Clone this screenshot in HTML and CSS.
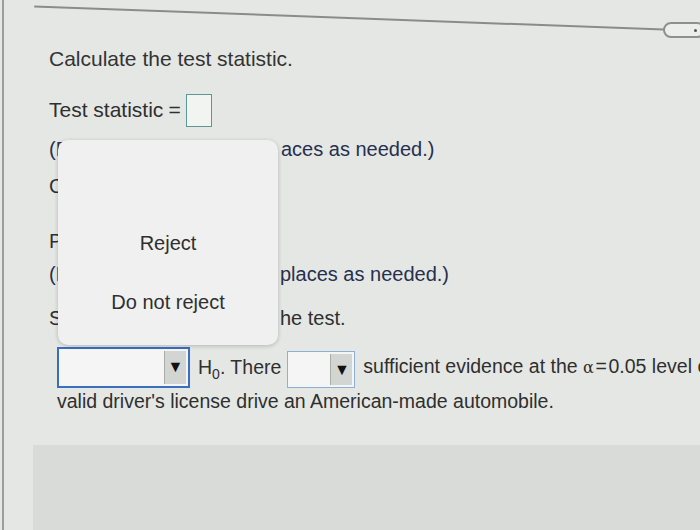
FILE: index.html
```html
<!DOCTYPE html>
<html>
<head>
<meta charset="utf-8">
<link rel="stylesheet" href="styles.css">
</head>
<body>
<div class="frame">
  <div class="topbar">
    <div class="rule"></div>
    <div class="pill"><span class="dot"></span></div>
  </div>
  <div class="content">
    <div class="row title">Calculate the test statistic.</div>
    <div class="row stat">Test statistic <span class="eq">=</span> <span class="answer"></span></div>
    <div class="row note r1"><span class="pre">(Round to two decimal pl</span>aces as needed.)</div>
    <div class="row r2">Calculate the P-value.</div>
    <div class="row r3">P-value = <span class="answer"></span></div>
    <div class="row note r4"><span class="pre">(Round to three decimal </span>places as needed.)</div>
    <div class="row r5"><span class="pre">State the conclusion of t</span>he test.</div>
    <div class="concl">
      <div class="row drow">
        <span class="select wide"><span class="arrow">&#9660;</span></span>
        <span class="txt">H<sub>0</sub>. There</span>
        <span class="select narrow"><span class="arrow">&#9660;</span></span>
        <span class="txt last">sufficient evidence at the <span class="greek">α</span>&#8202;=&#8202;0.05 level of significance</span>
      </div>
      <div class="row r6">valid driver's license drive an American-made automobile.</div>
    </div>
    <div class="menu">
      <div class="item first">Reject</div>
      <div class="item">Do not reject</div>
    </div>
  </div>
  <div class="band"></div>
</div>
</body>
</html>
```
FILE: styles.css
```css
html, body {
  margin: 0;
  padding: 0;
  width: 700px;
  height: 530px;
  overflow: hidden;
  background: #e5e7e5;
}
body {
  font-family: "Liberation Sans", Arial, sans-serif;
  color: #2f2f2f;
}
.frame {
  margin-left: 2px;
  border-left: 2px solid #9c9e9c;
  height: 530px;
  box-sizing: border-box;
  display: flex;
  flex-direction: column;
  overflow: hidden;
}
.topbar {
  height: 45px;
  display: flex;
  align-items: flex-start;
  flex-shrink: 0;
}
.rule {
  width: 630px;
  height: 2px;
  background: #8a8c8a;
  margin-left: 30px;
  margin-top: 17px;
  transform: rotate(2.1deg);
  flex-shrink: 0;
}
.pill {
  margin-left: -1px;
  margin-top: 22px;
  width: 42px;
  height: 16px;
  border: 2px solid #8e908e;
  border-radius: 10px;
  background: #eceeec;
  display: flex;
  align-items: center;
  justify-content: flex-end;
  padding-right: 6px;
  box-sizing: border-box;
  flex-shrink: 0;
}
.dot {
  width: 3px;
  height: 3px;
  background: #555;
  border-radius: 50%;
}
.content {
  position: relative;
  padding-left: 45px;
  flex-shrink: 0;
}
.row {
  height: 28px;
  line-height: 28px;
  font-size: 20px;
  white-space: nowrap;
}
.title { font-size: 21px; color: #333; }
.stat { margin-top: 23px; display: flex; align-items: center; font-size: 21px; }
.eq { margin: 0 5px 0 5px; }
.answer {
  display: inline-block;
  width: 24px;
  height: 31px;
  border: 1.5px solid #5d9994;
  background: #f2f4f2;
  vertical-align: middle;
  flex-shrink: 0;
}
.note { color: #27304e; }
.pre {
  display: inline-block;
  overflow: hidden;
  vertical-align: top;
}
.r1 { margin-top: 11px; }
.r1 .pre { width: 232px; }
.r2 { margin-top: 9px; }
.r3 { margin-top: 27px; display: flex; align-items: center; }
.r4 { margin-top: 5px; }
.r4 .pre { width: 231px; }
.r5 { margin-top: 16px; }
.r5 .pre { width: 231px; }
.concl { padding-left: 8px; }
.concl .row { font-size: 19.5px; }
.drow {
  margin-top: 14px;
  height: 42px;
  display: flex;
  align-items: center;
}
.select {
  display: inline-flex;
  justify-content: flex-end;
  align-items: stretch;
  background: #f4f5f4;
  box-sizing: border-box;
  padding: 2px;
  flex-shrink: 0;
}
.wide {
  width: 133px;
  height: 41px;
  border: 2px solid #3a6fc0;
}
.narrow {
  width: 68px;
  height: 37px;
  border: 1.5px solid #8fb0d6;
  margin-top: 5px;
}
.arrow {
  width: 21px;
  background: #d3d5d3;
  border-left: 1px solid #aaacaa;
  color: #111;
  font-size: 16px;
  display: flex;
  align-items: center;
  justify-content: center;
}
.txt { margin: 0 6px 0 8px; flex-shrink: 0; }
sub { font-size: 14px; line-height: 0; }
.greek { font-family: "DejaVu Serif", serif; font-size: 16px; }
.r6 { margin-top: -1px; }
.menu {
  position: absolute;
  left: 54px;
  top: 95px;
  width: 220px;
  height: 205px;
  background: #eff0ef;
  border-radius: 10px;
  box-shadow: 0 1px 4px rgba(0,0,0,0.22);
  display: flex;
  flex-direction: column;
  align-items: center;
  padding-top: 87px;
  box-sizing: border-box;
}
.item {
  height: 32px;
  line-height: 32px;
  font-size: 20px;
  color: #2f2f2f;
}
.item.first { margin-bottom: 27px; }
.band {
  margin-top: 30px;
  margin-left: 29px;
  flex: 1;
  background: #d9dbd9;
}
```
